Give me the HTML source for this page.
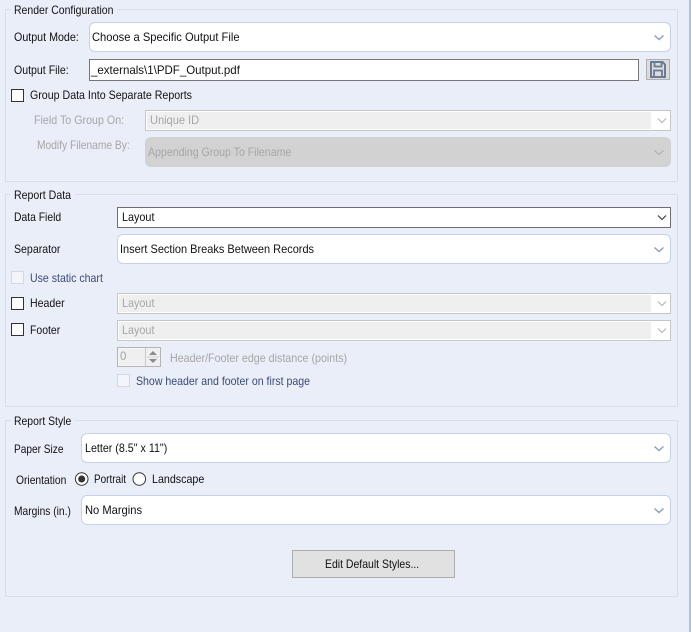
<!DOCTYPE html>
<html><head><meta charset="utf-8">
<style>
html,body{margin:0;padding:0}
body{width:691px;height:632px;background:#e9eef9;position:relative;overflow:hidden;font-family:"Liberation Sans",sans-serif;font-size:12px;color:#111}
div,svg{position:absolute;box-sizing:border-box}
.g{left:5px;width:673px;border:1px solid #d8dde6}
.t{white-space:nowrap;line-height:14px;height:14px;transform-origin:0 50%;transform:scaleX(calc(var(--x,1)*.958))}
.lg{left:14px}
.m{background:#e9eef9}
.s{background:#fff;border:1px solid #c5d2ea;border-radius:6px;left:117px;width:554px}
.d{background:#efefef;border:1px solid #c6c6c6;box-shadow:inset 0 0 0 1px #fff;left:117px;width:554px;height:21px}
.d i{position:absolute;right:1px;top:1px;bottom:1px;width:18px;background:#fff}
.c{width:13px;height:13px;left:11px;border:1px solid #333;background:#fff}
.c.o{border-color:#d4d8e0;background:#f3f5fb}
.dis{color:#a6a6a6}
.blue{color:#3c4a78}
svg.a{width:12px;height:7px;fill:none}
</style></head><body>
<div style="left:689px;top:0;width:2px;height:632px;background:#b0c0e4"></div>

<div class="g" style="top:9px;height:173px"></div>
<div class="m" style="left:11px;top:7px;width:106px;height:5px"></div>
<div class="t lg" style="top:3px;--x:.91">Render Configuration</div>
<div class="t" style="left:14px;top:30px;--x:.93">Output Mode:</div>
<div class="s" style="left:89px;top:22px;width:582px;height:30px"></div>
<div class="t" style="left:92px;top:30px;--x:.97">Choose a Specific Output File</div>
<svg class="a" style="left:653px;top:34px" viewBox="0 0 12 7"><path d="M1.5 1.5L6 5.5L10.5 1.5" stroke="#8f9fc0" stroke-width="1.5"/></svg>
<div class="t" style="left:14px;top:63px;--x:.92">Output File:</div>
<div style="left:89px;top:59px;width:550px;height:22px;background:#fff;border:1px solid #767676"></div>
<div class="t" style="left:91px;top:63px">_externals\1\PDF_Output.pdf</div>
<div style="left:646px;top:59px;width:24px;height:21px;background:#dcdcdc;border:1px solid #b0b0b0"></div>
<svg style="left:650px;top:61px;width:16px;height:17px" viewBox="0 0 16 17" fill="none"><path d="M1 1H12.5L15 3.5V16H1Z" stroke="#6c7a99" stroke-width="2"/><path d="M4.5 1V5.5H11.5V1M4 16V9.5H12V16" stroke="#6c7a99" stroke-width="1.8"/></svg>
<div class="c" style="top:89px"></div>
<div class="t" style="left:30px;top:88px;--x:.925">Group Data Into Separate Reports</div>
<div class="t dis" style="left:34px;top:113px;--x:.93">Field To Group On:</div>
<div class="d" style="left:145px;top:110px;width:526px"><i></i></div>
<div class="t dis" style="left:150px;top:113px;--x:.96">Unique ID</div>
<svg class="a" style="left:656px;top:117px" viewBox="0 0 12 7"><path d="M2 1.5L6 5.5L10 1.5" stroke="#b0b0b0" stroke-width="1"/></svg>
<div class="t dis" style="left:37px;top:138px;--x:.89">Modify Filename By:</div>
<div style="left:145px;top:137px;width:526px;height:30px;background:#d2d2d2;border-radius:6px"></div>
<div class="t dis" style="left:148px;top:145px;--x:.92">Appending Group To Filename</div>
<svg class="a" style="left:653px;top:149px" viewBox="0 0 12 7"><path d="M1.5 1.5L6 5.5L10.5 1.5" stroke="#b4b4b4" stroke-width="1.3"/></svg>

<div class="g" style="top:194px;height:213px"></div>
<div class="m" style="left:11px;top:192px;width:64px;height:5px"></div>
<div class="t lg" style="top:188px;--x:.92">Report Data</div>
<div class="t" style="left:14px;top:210px;--x:.9">Data Field</div>
<div style="left:117px;top:207px;width:554px;height:21px;background:#fff;border:1px solid #6e6e6e"></div>
<div class="t" style="left:122px;top:210px;--x:.94">Layout</div>
<svg class="a" style="left:656px;top:214px" viewBox="0 0 12 7"><path d="M2 1.5L6 5.5L10 1.5" stroke="#333" stroke-width="1.1"/></svg>
<div class="t" style="left:14px;top:242px;--x:.92">Separator</div>
<div class="s" style="top:234px;height:30px"></div>
<div class="t" style="left:120px;top:242px;--x:.955">Insert Section Breaks Between Records</div>
<svg class="a" style="left:653px;top:246px" viewBox="0 0 12 7"><path d="M1.5 1.5L6 5.5L10.5 1.5" stroke="#8f9fc0" stroke-width="1.5"/></svg>
<div class="c o" style="top:271px"></div>
<div class="t blue" style="left:30px;top:271px;--x:.92">Use static chart</div>
<div class="c" style="top:297px"></div>
<div class="t" style="left:30px;top:296px;--x:.92">Header</div>
<div class="d" style="top:293px"><i></i></div>
<div class="t dis" style="left:122px;top:296px;--x:.94">Layout</div>
<svg class="a" style="left:656px;top:300px" viewBox="0 0 12 7"><path d="M2 1.5L6 5.5L10 1.5" stroke="#b0b0b0" stroke-width="1"/></svg>
<div class="c" style="top:323px"></div>
<div class="t" style="left:30px;top:323px;--x:.91">Footer</div>
<div class="d" style="top:320px"><i></i></div>
<div class="t dis" style="left:122px;top:323px;--x:.94">Layout</div>
<svg class="a" style="left:656px;top:327px" viewBox="0 0 12 7"><path d="M2 1.5L6 5.5L10 1.5" stroke="#b0b0b0" stroke-width="1"/></svg>
<div style="left:117px;top:347px;width:44px;height:20px;background:#efefef;border:1px solid #b4b4b4;box-shadow:inset 0 0 0 1px #f7f7f7"></div>
<div style="left:145px;top:348px;width:15px;height:18px;background:#f0f0f0;border-left:1px solid #c8c8c8"></div>
<svg style="left:146px;top:349px;width:14px;height:16px" viewBox="0 0 14 16"><path d="M7 2L11 6H3Z" fill="#8a8a8a"/><path d="M7 14L11 10H3Z" fill="#8a8a8a"/><path d="M1 8H13" stroke="#d0d0d0"/></svg>
<div class="t dis" style="left:120px;top:349px">0</div>
<div class="t dis" style="left:170px;top:351px;--x:.93">Header/Footer edge distance (points)</div>
<div class="c o" style="left:117px;top:374px"></div>
<div class="t blue" style="left:136px;top:374px;--x:.92">Show header and footer on first page</div>

<div class="g" style="top:420px;height:177px"></div>
<div class="m" style="left:11px;top:418px;width:64px;height:5px"></div>
<div class="t lg" style="top:414px;--x:.905">Report Style</div>
<div class="t" style="left:14px;top:442px;--x:.88">Paper Size</div>
<div class="s" style="left:81px;top:433px;width:590px;height:30px"></div>
<div class="t" style="left:85px;top:441px;--x:.93">Letter (8.5" x 11")</div>
<svg class="a" style="left:653px;top:445px" viewBox="0 0 12 7"><path d="M1.5 1.5L6 5.5L10.5 1.5" stroke="#8f9fc0" stroke-width="1.5"/></svg>
<div class="t" style="left:16px;top:473px;--x:.895">Orientation</div>
<svg style="left:74px;top:471px;width:16px;height:16px" viewBox="0 0 16 16"><circle cx="7.7" cy="8" r="6.3" fill="#fff" stroke="#333"/><circle cx="7.7" cy="8" r="3.5" fill="#333"/></svg>
<div class="t" style="left:94px;top:472px;--x:.865">Portrait</div>
<svg style="left:131px;top:471px;width:16px;height:16px" viewBox="0 0 16 16"><circle cx="8.3" cy="8" r="6.3" fill="#fff" stroke="#333"/></svg>
<div class="t" style="left:152px;top:472px;--x:.93">Landscape</div>
<div class="t" style="left:14px;top:504px;--x:.89">Margins (in.)</div>
<div class="s" style="left:81px;top:495px;width:590px;height:30px"></div>
<div class="t" style="left:85px;top:503px;--x:.97">No Margins</div>
<svg class="a" style="left:653px;top:507px" viewBox="0 0 12 7"><path d="M1.5 1.5L6 5.5L10.5 1.5" stroke="#8f9fc0" stroke-width="1.5"/></svg>
<div style="left:292px;top:550px;width:163px;height:28px;background:#e1e1e1;border:1px solid #adadad"></div>
<div class="t" style="left:325px;top:557px;--x:.91">Edit Default Styles...</div>
</body></html>
